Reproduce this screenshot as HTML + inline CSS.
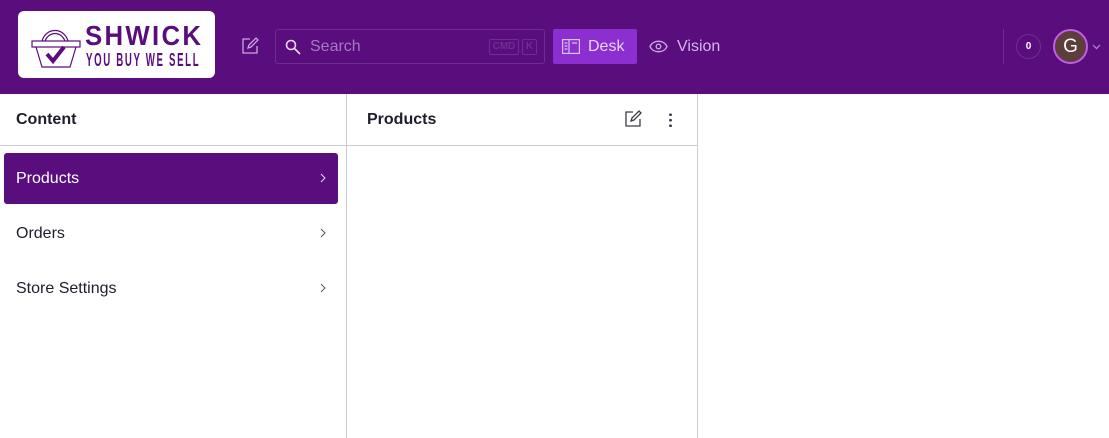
<!DOCTYPE html>
<html><head><meta charset="utf-8"><style>
*{box-sizing:border-box;margin:0;padding:0}
body{width:1109px;height:438px;overflow:hidden;background:#fff;font-family:"Liberation Sans",sans-serif;position:relative}
.hdr{position:absolute;left:0;top:0;width:1109px;height:94px;background:#5a0d7d}
.abs{position:absolute}
.logo{left:18px;top:11px;width:197px;height:67px;background:#fff;border-radius:6px}
.search{left:275px;top:29px;width:270px;height:35px;border:1px solid #6e2e92;border-radius:3px}
.kbd{position:absolute;top:9px;height:16px;border:1px solid #6e2e92;border-radius:2px;color:#6e2e92;font-size:10px;font-weight:bold;line-height:14px;text-align:center}
.desk{left:553px;top:29px;width:84px;height:35px;background:#8b2fd0;border-radius:2px}
.pane{position:absolute;top:94px;bottom:0;border-right:1px solid #cfcbd6}
.ph{height:52px;border-bottom:1px solid #cfcbd6;font-size:16px;font-weight:bold;color:#1e1e2a;padding:17px 16px 0}
.item{position:absolute;left:4px;width:334px;height:51px;border-radius:3px;font-size:16px;color:#1e1e2a;padding:17px 12px}
.chev{position:absolute;right:12px;top:20px}
</style></head><body>
<div class="hdr"></div>
<div class="abs logo">
<svg class="abs" style="left:12px;top:12px" width="52" height="48" viewBox="0 0 52 48" fill="none" stroke="#5a0d7d" stroke-width="1.2">
<path d="M12 18 C16 4 34 4 38 18"/><path d="M15 18 C19 8 31 8 35 18"/>
<rect x="2" y="18" width="48" height="6" />
<path d="M6 24 L12 44 L40 44 L46 24"/>
<path d="M17 31 L23 38 L34 24" stroke-width="4"/>
</svg>
<div class="abs" style="left:67px;top:9px;font-size:28px;font-weight:bold;color:#5a0d7d;letter-spacing:2.5px;white-space:nowrap;transform:scaleX(0.92);transform-origin:top left">SHWICK</div>
<div class="abs" style="left:68px;top:38px;font-size:14px;font-weight:bold;color:#5a0d7d;letter-spacing:2.4px;white-space:nowrap;transform:scale(0.69,1.3);transform-origin:top left">YOU BUY WE SELL</div>
</div>
<svg class="abs" style="left:241px;top:37px" width="18" height="18" viewBox="0 0 18 18" fill="none" stroke="#c9a6e0" stroke-width="1.3"><path d="M9 2H2v14h14V9"/><path d="M7 11l1-3 7-7 2 2-7 7z"/></svg>
<div class="abs search">
<svg class="abs" style="left:9px;top:9px" width="16" height="16" viewBox="0 0 16 16" fill="none" stroke="#e8daf2" stroke-width="1.6"><circle cx="6" cy="6" r="4.5"/><path d="M9.5 9.5L15 15"/></svg>
<div class="abs" style="left:34px;top:8px;font-size:16px;color:#a677c4">Search</div>
<div class="kbd" style="left:213px;width:30px">CMD</div>
<div class="kbd" style="left:246px;width:15px">K</div>
</div>
<div class="abs desk">
<svg class="abs" style="left:9px;top:10px" width="18" height="15" viewBox="0 0 18 15" fill="none" stroke="#d8c2ee" stroke-width="1.2"><rect x="0.6" y="0.6" width="16.8" height="13.8"/><path d="M7 1v13M2.5 4h3M2.5 7h3M2.5 10h3M10 4h5"/></svg>
<div class="abs" style="left:35px;top:9px;font-size:16px;color:#e6d6f4">Desk</div>
</div>
<svg class="abs" style="left:649px;top:40px" width="19" height="13" viewBox="0 0 19 13" fill="none" stroke="#c9a6e0" stroke-width="1.4"><path d="M1 6.5C4-0.5 15-0.5 18 6.5C15 13.5 4 13.5 1 6.5z"/><circle cx="9.5" cy="6.5" r="2.3"/></svg>
<div class="abs" style="left:677px;top:38px;font-size:16px;color:#d2b6e6">Vision</div>
<div class="abs" style="left:1003px;top:29px;width:1px;height:35px;background:#6e2e92"></div>
<div class="abs" style="left:1016px;top:34px;width:25px;height:25px;border:1px solid #6e2e92;border-radius:50%;color:#fff;font-size:10px;font-weight:bold;text-align:center;line-height:23px">0</div>
<div class="abs" style="left:1053px;top:29px;width:35px;height:35px;border:2px solid #c25ee8;border-radius:50%;background:#5d3e3a;color:#fff;font-size:19px;text-align:center;line-height:31px">G</div>
<svg class="abs" style="left:1092px;top:44px" width="9" height="6" viewBox="0 0 9 6" fill="none" stroke="#b98bd6" stroke-width="1.2"><path d="M1 1l3.5 3.5L8 1"/></svg>

<div class="pane" style="left:0;width:347px">
<div class="ph">Content</div>
</div>
<div class="item" style="top:153px;background:#5a0d7d;color:#fff">Products<svg class="chev" width="6" height="10" viewBox="0 0 6 10" fill="none" stroke="#e6d6f4" stroke-width="1"><path d="M1 1l4 4-4 4"/></svg></div>
<div class="item" style="top:208px">Orders<svg class="chev" width="6" height="10" viewBox="0 0 6 10" fill="none" stroke="#555" stroke-width="1"><path d="M1 1l4 4-4 4"/></svg></div>
<div class="item" style="top:263px">Store Settings<svg class="chev" width="6" height="10" viewBox="0 0 6 10" fill="none" stroke="#555" stroke-width="1"><path d="M1 1l4 4-4 4"/></svg></div>
<div class="pane" style="left:347px;width:351px">
<div class="ph" style="padding-left:20px">Products</div>
<svg class="abs" style="left:277px;top:16px" width="18" height="18" viewBox="0 0 18 18" fill="none" stroke="#3a3a48" stroke-width="1.3"><path d="M9 2H2v14h14V9"/><path d="M7 11l1-3 7-7 2 2-7 7z"/></svg>
<div class="abs" style="left:322px;top:18px;width:3px;height:15px;background:radial-gradient(circle,#3a3a48 1.3px,transparent 1.5px) 0 0/3px 5.5px"></div>
</div>
</body></html>
